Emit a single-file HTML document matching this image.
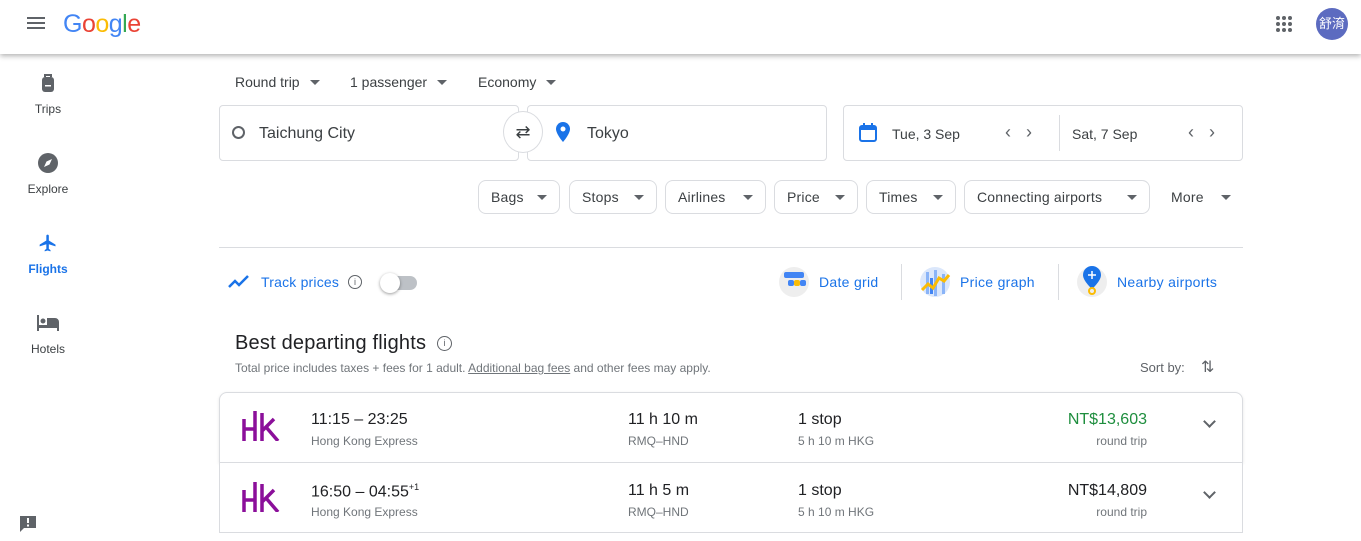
<!DOCTYPE html><html><head><style>
*{box-sizing:border-box;margin:0;padding:0}
body{width:1361px;height:541px;overflow:hidden;background:#fff;font-family:"Liberation Sans",Arial,sans-serif;color:#3c4043;position:relative}
.abs{position:absolute}
.hdr{position:absolute;left:0;top:0;width:1361px;height:54px;background:#fff;box-shadow:0 2px 5px rgba(0,0,0,.3);z-index:5}
.nav{position:absolute;left:0;width:96px;text-align:center;font-size:12px;color:#3c4043}
.dd{position:absolute;top:74px;font-size:14px;color:#3c4043}
.dd:after{content:"";display:inline-block;margin-left:10px;border:5px solid transparent;border-top-color:#5f6368;border-bottom:0;vertical-align:2px}
.box{position:absolute;border:1px solid #dadce0;border-radius:4px;height:56px;top:105px}
.chip{position:absolute;top:180px;height:34px;border:1px solid #dadce0;border-radius:8px;font-size:14px;line-height:32px;padding-left:12px;color:#3c4043;letter-spacing:.2px}
.chip:after{content:"";position:absolute;right:12px;top:14px;border:5px solid transparent;border-top-color:#5f6368;border-bottom:0}
.row{position:absolute;left:219px;width:1024px;height:71px;border:1px solid #dadce0;background:#fff}
.t1{position:absolute;font-size:16px;color:#202124}
.t2{position:absolute;font-size:12px;color:#70757a}
.chev{position:absolute;left:985px;top:28px;width:9px;height:9px;border-right:2px solid #5f6368;border-bottom:2px solid #5f6368;transform:rotate(45deg)}
</style></head><body>
<div class="hdr">
 <div class="abs" style="left:27px;top:17px;width:18px;height:2px;background:#5f6368;box-shadow:0 5px 0 #5f6368,0 10px 0 #5f6368"></div>
 <div class="abs" style="left:63px;top:10px;font-size:25px;letter-spacing:-0.5px"><span style="color:#4285f4">G</span><span style="color:#ea4335">o</span><span style="color:#fbbc05">o</span><span style="color:#4285f4">g</span><span style="color:#34a853">l</span><span style="color:#ea4335">e</span></div>
 <div class="abs" style="left:1276px;top:16px;width:4px;height:4px;background:#5f6368;border-radius:50%;box-shadow:6px 0 #5f6368,12px 0 #5f6368,0 6px #5f6368,6px 6px #5f6368,12px 6px #5f6368,0 12px #5f6368,6px 12px #5f6368,12px 12px #5f6368"></div>
 <div class="abs" style="left:1316px;top:8px;width:32px;height:32px;border-radius:50%;background:#5c6bc0;color:#fff;font-size:13px;line-height:32px;text-align:center;font-family:'Liberation Sans','Noto Sans CJK TC',sans-serif">舒淯</div>
</div>
<svg class="abs" style="left:40px;top:73px" width="16" height="20" viewBox="0 0 16 20"><rect x="2" y="4" width="12" height="15" rx="3" fill="#5f6368"/><path d="M5 4V2h6v2" stroke="#5f6368" stroke-width="2" fill="none"/><rect x="5" y="12" width="6" height="1.5" fill="#fff"/></svg>
<div class="nav" style="top:102px">Trips</div>
<svg class="abs" style="left:38px;top:153px" width="20" height="20" viewBox="0 0 20 20"><circle cx="10" cy="10" r="10" fill="#5f6368"/><path d="M14 6l-2.5 5.5L6 14l2.5-5.5z" fill="#fff"/></svg>
<div class="nav" style="top:182px">Explore</div>
<svg class="abs" style="left:37px;top:233px" width="22" height="20" viewBox="0 0 24 24"><path fill="#1a73e8" d="M21 16v-2l-8-5V3.5a1.5 1.5 0 0 0-3 0V9l-8 5v2l8-2.5V19l-2 1.5V22l3.5-1 3.5 1v-1.5L13 19v-5.5z"/></svg>
<div class="nav" style="top:262px;color:#1a73e8;font-weight:bold">Flights</div>
<svg class="abs" style="left:36px;top:314px" width="24" height="18" viewBox="0 0 24 18"><path fill="#5f6368" d="M1 1h2v10h8V4h8a4 4 0 0 1 4 4v9h-2v-3H3v3H1z"/><circle cx="7" cy="7" r="2.5" fill="#5f6368"/></svg>
<div class="nav" style="top:342px">Hotels</div>
<svg class="abs" style="left:18px;top:514px" width="20" height="20" viewBox="0 0 20 20"><path d="M2 2h16v12H6l-4 4z" fill="#5f6368"/><rect x="9" y="4" width="2" height="5" fill="#fff"/><rect x="9" y="10.5" width="2" height="2" fill="#fff"/></svg>

<div class="dd" style="left:235px">Round trip</div>
<div class="dd" style="left:350px">1 passenger</div>
<div class="dd" style="left:478px">Economy</div>
<div class="box" style="left:219px;width:300px"></div>
<div class="abs" style="left:232px;top:126px;width:13px;height:13px;border:2.5px solid #5f6368;border-radius:50%"></div>
<div class="abs" style="left:259px;top:125px;font-size:16px">Taichung City</div>
<div class="box" style="left:527px;width:300px"></div>
<div class="abs" style="left:503px;top:111px;width:40px;height:42px;border:1px solid #dadce0;border-radius:50%;background:#fff;text-align:center;line-height:40px;font-size:18px;color:#3c4043">⇄</div>
<svg class="abs" style="left:555px;top:122px" width="16" height="20" viewBox="0 0 16 20"><path fill="#1a73e8" d="M8 0a7 7 0 0 0-7 7c0 5 7 13 7 13s7-8 7-13a7 7 0 0 0-7-7z"/><circle cx="8" cy="7" r="2.5" fill="#fff"/></svg>
<div class="abs" style="left:587px;top:125px;font-size:16px">Tokyo</div>
<div class="box" style="left:843px;width:400px"></div>
<svg class="abs" style="left:859px;top:123px" width="18" height="19" viewBox="0 0 18 19"><rect x="1" y="3" width="16" height="15" rx="2" fill="none" stroke="#1a73e8" stroke-width="2"/><rect x="1" y="3" width="16" height="4" fill="#1a73e8"/><rect x="4" y="0" width="2" height="4" fill="#1a73e8"/><rect x="12" y="0" width="2" height="4" fill="#1a73e8"/></svg>
<div class="abs" style="left:892px;top:126px;font-size:14px">Tue, 3 Sep</div>
<div class="abs" style="left:1005px;top:122px;font-size:18px;color:#5f6368">‹&nbsp;&nbsp;&nbsp;›</div>
<div class="abs" style="left:1059px;top:115px;width:1px;height:36px;background:#dadce0"></div>
<div class="abs" style="left:1072px;top:126px;font-size:14px">Sat, 7 Sep</div>
<div class="abs" style="left:1188px;top:122px;font-size:18px;color:#5f6368">‹&nbsp;&nbsp;&nbsp;›</div>

<div class="chip" style="left:478px;width:82px">Bags</div>
<div class="chip" style="left:569px;width:88px">Stops</div>
<div class="chip" style="left:665px;width:101px">Airlines</div>
<div class="chip" style="left:774px;width:84px">Price</div>
<div class="chip" style="left:866px;width:90px">Times</div>
<div class="chip" style="left:964px;width:186px">Connecting airports</div>
<div class="chip" style="left:1158px;width:86px;border-color:transparent">More</div>
<div class="abs" style="left:219px;top:247px;width:1024px;height:1px;background:#dadce0"></div>

<svg class="abs" style="left:227px;top:274px" width="24" height="16" viewBox="0 0 24 16"><path d="M2 13l6-6 4 4 9-9" fill="none" stroke="#1a73e8" stroke-width="2.5"/></svg>
<div class="abs" style="left:261px;top:274px;font-size:14px;color:#1a73e8;letter-spacing:.2px">Track prices</div>
<div class="abs" style="left:348px;top:275px;width:14px;height:14px;border:1.5px solid #5f6368;border-radius:50%;font-size:9px;text-align:center;line-height:12px;color:#5f6368">i</div>
<div class="abs" style="left:383px;top:276px;width:34px;height:14px;background:#bdc1c6;border-radius:7px"></div>
<div class="abs" style="left:380px;top:273px;width:20px;height:20px;background:#fff;border-radius:50%;box-shadow:0 1px 3px rgba(0,0,0,.4)"></div>

<div class="abs" style="left:779px;top:267px;width:30px;height:30px;border-radius:50%;background:#eee"></div>
<div class="abs" style="left:784px;top:272px;width:20px;height:6px;background:#4285f4;border-radius:2px"></div>
<div class="abs" style="left:788px;top:280px;width:6px;height:6px;background:#4285f4;border-radius:2px;box-shadow:6px 0 #fbbc04,12px 0 #4285f4"></div>
<div class="abs" style="left:819px;top:274px;font-size:14px;color:#1a73e8;letter-spacing:.3px">Date grid</div>
<div class="abs" style="left:901px;top:264px;width:1px;height:36px;background:#dadce0"></div>
<div class="abs" style="left:920px;top:267px;width:30px;height:30px;border-radius:50%;background:#dbe7fb"></div>
<svg class="abs" style="left:920px;top:266px" width="32" height="32"><rect x="6" y="6" width="3" height="22" fill="#8ab4f8"/><rect x="14" y="4" width="3" height="26" fill="#8ab4f8"/><rect x="22" y="8" width="3" height="20" fill="#8ab4f8"/><rect x="10" y="12" width="3" height="16" fill="#4285f4"/><path d="M2 24l6-6 5 4 6-10 5 3 5-6" stroke="#fbbc04" stroke-width="3" fill="none"/></svg>
<div class="abs" style="left:960px;top:274px;font-size:14px;color:#1a73e8;letter-spacing:.3px">Price graph</div>
<div class="abs" style="left:1058px;top:264px;width:1px;height:36px;background:#dadce0"></div>
<div class="abs" style="left:1077px;top:267px;width:30px;height:30px;border-radius:50%;background:#eee"></div>
<svg class="abs" style="left:1081px;top:265px" width="22" height="30" viewBox="0 0 22 30"><path fill="#1a73e8" d="M11 1a9 9 0 0 0-9 9c0 6 9 14 9 14s9-8 9-14a9 9 0 0 0-9-9z"/><path d="M7 10h8M11 6v8" stroke="#fff" stroke-width="1.5"/><circle cx="11" cy="26" r="3" fill="none" stroke="#fbbc04" stroke-width="2"/></svg>
<div class="abs" style="left:1117px;top:274px;font-size:14px;color:#1a73e8;letter-spacing:.3px">Nearby airports</div>

<div class="abs" style="left:235px;top:332px;font-size:20px;color:#202124;letter-spacing:.2px">Best departing flights</div>
<div class="abs" style="left:437px;top:336px;width:15px;height:15px;border:1.5px solid #5f6368;border-radius:50%;font-size:9px;text-align:center;line-height:13px;color:#5f6368">i</div>
<div class="abs" style="left:235px;top:361px;font-size:12px;color:#70757a">Total price includes taxes + fees for 1 adult. <span style="text-decoration:underline">Additional bag fees</span> and other fees may apply.</div>
<div class="abs" style="left:1140px;top:360px;font-size:13px;color:#5f6368">Sort by:</div>
<div class="abs" style="left:1201px;top:357px;font-size:16px;color:#5f6368">⇅</div>

<div class="row" style="top:392px;border-radius:8px 8px 0 0;box-shadow:0 1px 3px rgba(0,0,0,.1)">
 <svg class="abs" style="left:22px;top:18px" width="38" height="30" viewBox="0 0 38 30"><path d="M2 8v22M13 0v30M2 18h11M20 2v28M20 20l12-12M24 16l12 14" stroke="#8b0f9a" stroke-width="3.5" fill="none"/></svg>
 <div class="t1" style="left:91px;top:18px">11:15 – 23:25</div><div class="t2" style="left:91px;top:41px">Hong Kong Express</div>
 <div class="t1" style="left:408px;top:18px">11 h 10 m</div><div class="t2" style="left:408px;top:41px">RMQ–HND</div>
 <div class="t1" style="left:578px;top:18px">1 stop</div><div class="t2" style="left:578px;top:41px">5 h 10 m HKG</div>
 <div class="t1" style="right:95px;top:18px;color:#1e8e3e">NT$13,603</div><div class="t2" style="right:95px;top:41px">round trip</div>
 <div class="chev" style="top:24px"></div>
</div>
<div class="row" style="top:462px">
 <svg class="abs" style="left:22px;top:19px" width="38" height="30" viewBox="0 0 38 30"><path d="M2 8v22M13 0v30M2 18h11M20 2v28M20 20l12-12M24 16l12 14" stroke="#8b0f9a" stroke-width="3.5" fill="none"/></svg>
 <div class="t1" style="left:91px;top:19px">16:50 – 04:55<sup style="font-size:9px">+1</sup></div><div class="t2" style="left:91px;top:42px">Hong Kong Express</div>
 <div class="t1" style="left:408px;top:19px">11 h 5 m</div><div class="t2" style="left:408px;top:42px">RMQ–HND</div>
 <div class="t1" style="left:578px;top:19px">1 stop</div><div class="t2" style="left:578px;top:42px">5 h 10 m HKG</div>
 <div class="t1" style="right:95px;top:19px">NT$14,809</div><div class="t2" style="right:95px;top:42px">round trip</div>
 <div class="chev" style="top:25px"></div>
</div>
</body></html>
